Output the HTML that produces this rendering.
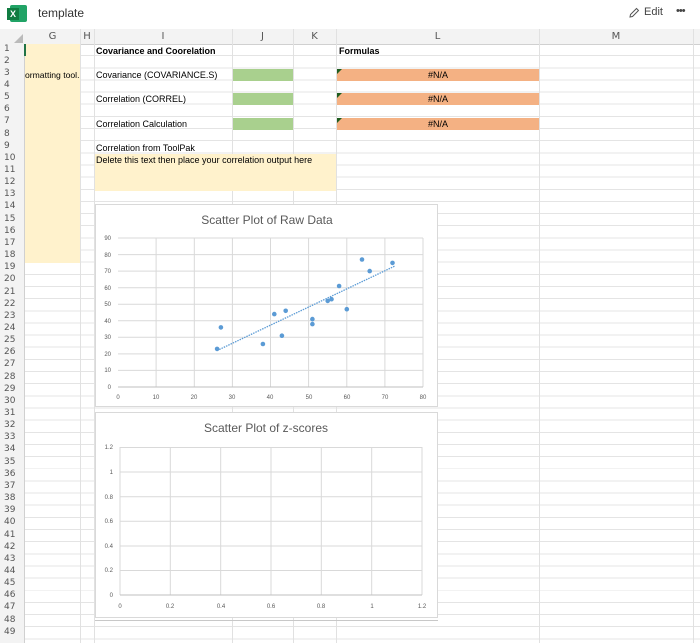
<!DOCTYPE html>
<html><head><meta charset="utf-8"><style>
body{margin:0;width:700px;height:643px;overflow:hidden;background:#fff;font-family:"Liberation Sans",sans-serif;position:relative}
.a{position:absolute}
.t{font-size:9px;color:#000;white-space:nowrap}
.hdr{font-size:10px;color:#555;text-align:center;top:31px;font-family:"DejaVu Sans",sans-serif}
.rn{font-size:9px;color:#555;left:4px;font-family:"DejaVu Sans",sans-serif}
</style></head><body>
<!-- top bar -->
<div class="a" style="left:10px;top:5px;width:17px;height:17px;background:#21a366;border-radius:2px"></div>
<div class="a" style="left:7px;top:8px;width:12px;height:12px;background:#107c41;color:#fff;font-size:9px;font-weight:bold;text-align:center;line-height:12px">X</div>
<div class="a" style="left:38px;top:6px;font-size:12px;color:#333">template</div>
<svg class="a" style="left:628px;top:7px" width="12" height="12" viewBox="0 0 12 12"><path d="M2 10 L2.5 7.5 L8.5 1.5 L10.5 3.5 L4.5 9.5 Z" fill="none" stroke="#555" stroke-width="1"/></svg>
<div class="a" style="left:644px;top:6px;font-size:11px;color:#444">Edit</div>
<div class="a" style="left:676px;top:5px;font-size:11px;color:#444;letter-spacing:-1px">•••</div>
<!-- header row -->
<div class="a" style="left:0;top:29px;width:700px;height:15px;background:#f3f3f3;border-bottom:1px solid #d0d0d0"></div>
<div class="a" style="left:0;top:44px;width:24px;height:599px;background:#f3f3f3;border-right:1px solid #d0d0d0"></div>
<svg class="a" style="left:14px;top:34px" width="9" height="9"><path d="M9 0 L9 9 L0 9 Z" fill="#bbb"/></svg>
<!-- grid -->
<div class="a" style="left:25px;top:44px;width:675px;height:599px;background:repeating-linear-gradient(to bottom,transparent 0,transparent 11.15px,#e4e4e4 11.15px,#e4e4e4 12.15px)"></div>
<div class="a" style="left:80px;top:29px;width:1px;height:614px;background:#e1e1e1"></div>
<div class="a" style="left:94px;top:29px;width:1px;height:614px;background:#e1e1e1"></div>
<div class="a" style="left:232px;top:29px;width:1px;height:614px;background:#e1e1e1"></div>
<div class="a" style="left:293px;top:29px;width:1px;height:614px;background:#e1e1e1"></div>
<div class="a" style="left:336px;top:29px;width:1px;height:614px;background:#e1e1e1"></div>
<div class="a" style="left:539px;top:29px;width:1px;height:614px;background:#e1e1e1"></div>
<div class="a" style="left:693px;top:29px;width:1px;height:614px;background:#e1e1e1"></div>
<div class="a hdr" style="left:25px;width:55px">G</div>
<div class="a hdr" style="left:80px;width:14px">H</div>
<div class="a hdr" style="left:94px;width:138px">I</div>
<div class="a hdr" style="left:232px;width:61px">J</div>
<div class="a hdr" style="left:293px;width:43px">K</div>
<div class="a hdr" style="left:336px;width:203px">L</div>
<div class="a hdr" style="left:539px;width:154px">M</div>
<div id="rn"></div>
<!-- yellow G column -->
<div class="a" style="left:25px;top:44px;width:55px;height:219px;background:#fff2cc"></div>
<div class="a" style="left:24px;top:44px;width:2px;height:12px;background:#217346"></div>
<div class="a t" style="left:25px;top:70px;font-size:8.6px">ormatting tool.</div>
<div class="a t" style="left:96px;top:46px;font-weight:bold">Covariance and Coorelation</div>
<div class="a t" style="left:339px;top:46px;font-weight:bold">Formulas</div>
<div class="a t" style="left:96px;top:70px">Covariance (COVARIANCE.S)</div>
<div class="a t" style="left:96px;top:94px">Correlation (CORREL)</div>
<div class="a t" style="left:96px;top:119px">Correlation Calculation</div>
<div class="a t" style="left:96px;top:143px">Correlation from ToolPak</div>
<div class="a" style="left:95px;top:154px;width:241px;height:37px;background:#fff2cc"></div>
<div class="a t" style="left:96px;top:155px">Delete this text then place your correlation output here</div>
<div class="a" style="left:233px;top:69px;width:60px;height:12px;background:#a9d08e"></div>
<div class="a" style="left:233px;top:93px;width:60px;height:12px;background:#a9d08e"></div>
<div class="a" style="left:233px;top:118px;width:60px;height:12px;background:#a9d08e"></div>
<div class="a" style="left:337px;top:69px;width:202px;height:12px;background:#f4b183"></div>
<div class="a" style="left:337px;top:93px;width:202px;height:12px;background:#f4b183"></div>
<div class="a" style="left:337px;top:118px;width:202px;height:12px;background:#f4b183"></div>
<svg class="a" style="left:337px;top:69px" width="5" height="5"><path d="M0 0 L5 0 L0 5Z" fill="#1e5c1e"/></svg>
<svg class="a" style="left:337px;top:93px" width="5" height="5"><path d="M0 0 L5 0 L0 5Z" fill="#1e5c1e"/></svg>
<svg class="a" style="left:337px;top:118px" width="5" height="5"><path d="M0 0 L5 0 L0 5Z" fill="#1e5c1e"/></svg>
<div class="a t" style="left:337px;top:70px;width:202px;text-align:center">#N/A</div>
<div class="a t" style="left:337px;top:94px;width:202px;text-align:center">#N/A</div>
<div class="a t" style="left:337px;top:119px;width:202px;text-align:center">#N/A</div>
<svg class="a" style="left:0;top:0" width="700" height="643" font-family="Liberation Sans,sans-serif">
<rect x="95.5" y="204.5" width="342" height="202" fill="#fff" stroke="#d9d9d9"/>
<text x="267" y="224" text-anchor="middle" font-size="12" fill="#595959">Scatter Plot of Raw Data</text>
<g stroke="#d9d9d9" stroke-width="1">
<line x1="118" y1="238" x2="423" y2="238"/><line x1="118" y1="254.6" x2="423" y2="254.6"/><line x1="118" y1="271.1" x2="423" y2="271.1"/><line x1="118" y1="287.7" x2="423" y2="287.7"/><line x1="118" y1="304.2" x2="423" y2="304.2"/><line x1="118" y1="320.8" x2="423" y2="320.8"/><line x1="118" y1="337.3" x2="423" y2="337.3"/><line x1="118" y1="353.9" x2="423" y2="353.9"/><line x1="118" y1="370.4" x2="423" y2="370.4"/>
<line x1="156.1" y1="238" x2="156.1" y2="387"/><line x1="194.3" y1="238" x2="194.3" y2="387"/><line x1="232.4" y1="238" x2="232.4" y2="387"/><line x1="270.5" y1="238" x2="270.5" y2="387"/><line x1="308.6" y1="238" x2="308.6" y2="387"/><line x1="346.8" y1="238" x2="346.8" y2="387"/><line x1="384.9" y1="238" x2="384.9" y2="387"/><line x1="423" y1="238" x2="423" y2="387"/>
</g>
<line x1="118" y1="387" x2="423" y2="387" stroke="#bfbfbf"/>
<g font-size="6" fill="#595959" text-anchor="end">
<text x="111" y="240">90</text><text x="111" y="257">80</text><text x="111" y="273">70</text><text x="111" y="290">60</text><text x="111" y="306">50</text><text x="111" y="323">40</text><text x="111" y="339">30</text><text x="111" y="356">20</text><text x="111" y="372">10</text><text x="111" y="389">0</text>
</g>
<g font-size="6" fill="#595959" text-anchor="middle">
<text x="118" y="399">0</text><text x="156" y="399">10</text><text x="194" y="399">20</text><text x="232" y="399">30</text><text x="270" y="399">40</text><text x="309" y="399">50</text><text x="347" y="399">60</text><text x="385" y="399">70</text><text x="423" y="399">80</text>
</g>
<line x1="217" y1="350.6" x2="394.5" y2="266.2" stroke="#5b9bd5" stroke-width="1.3" stroke-dasharray="1.5,1"/>
<g fill="#5b9bd5">
<circle cx="217.1" cy="348.9" r="2.3"/><circle cx="220.9" cy="327.4" r="2.3"/><circle cx="262.9" cy="344" r="2.3"/><circle cx="274.3" cy="314.1" r="2.3"/><circle cx="281.9" cy="335.7" r="2.3"/><circle cx="285.7" cy="310.8" r="2.3"/><circle cx="312.4" cy="319.1" r="2.3"/><circle cx="312.4" cy="324.1" r="2.3"/><circle cx="327.7" cy="300.9" r="2.3"/><circle cx="331.5" cy="299.2" r="2.3"/><circle cx="339.1" cy="286" r="2.3"/><circle cx="346.8" cy="309.2" r="2.3"/><circle cx="362" cy="259.5" r="2.3"/><circle cx="369.7" cy="271.1" r="2.3"/><circle cx="392.5" cy="262.9" r="2.3"/>
</g>
<rect x="95.5" y="412.5" width="342" height="205" fill="#fff" stroke="#d9d9d9"/>
<line x1="95" y1="620.5" x2="438" y2="620.5" stroke="#c8c8c8"/>
<text x="266" y="432" text-anchor="middle" font-size="12" fill="#595959">Scatter Plot of z-scores</text>
<g stroke="#d9d9d9">
<line x1="120" y1="447.5" x2="422" y2="447.5"/><line x1="120" y1="472" x2="422" y2="472"/><line x1="120" y1="496.7" x2="422" y2="496.7"/><line x1="120" y1="521.3" x2="422" y2="521.3"/><line x1="120" y1="546" x2="422" y2="546"/><line x1="120" y1="570.5" x2="422" y2="570.5"/>
<line x1="170.3" y1="447" x2="170.3" y2="595"/><line x1="220.7" y1="447" x2="220.7" y2="595"/><line x1="271" y1="447" x2="271" y2="595"/><line x1="321.3" y1="447" x2="321.3" y2="595"/><line x1="371.7" y1="447" x2="371.7" y2="595"/><line x1="422" y1="447" x2="422" y2="595"/>
<line x1="120" y1="447" x2="120" y2="595"/>
</g>
<line x1="120" y1="595" x2="422" y2="595" stroke="#bfbfbf"/>
<g font-size="6" fill="#595959" text-anchor="end">
<text x="113" y="449">1.2</text><text x="113" y="474">1</text><text x="113" y="499">0.8</text><text x="113" y="523">0.6</text><text x="113" y="548">0.4</text><text x="113" y="572">0.2</text><text x="113" y="597">0</text>
</g>
<g font-size="6" fill="#595959" text-anchor="middle">
<text x="120" y="608">0</text><text x="170" y="608">0.2</text><text x="221" y="608">0.4</text><text x="271" y="608">0.6</text><text x="321" y="608">0.8</text><text x="372" y="608">1</text><text x="422" y="608">1.2</text>
</g>
</svg>
<script>
var h='';for(var i=1;i<=49;i++){h+='<div class="a rn" style="top:'+(43.5+(i-1)*12.15)+'px">'+i+'</div>';}
document.getElementById('rn').innerHTML=h;
</script>
</body></html>
